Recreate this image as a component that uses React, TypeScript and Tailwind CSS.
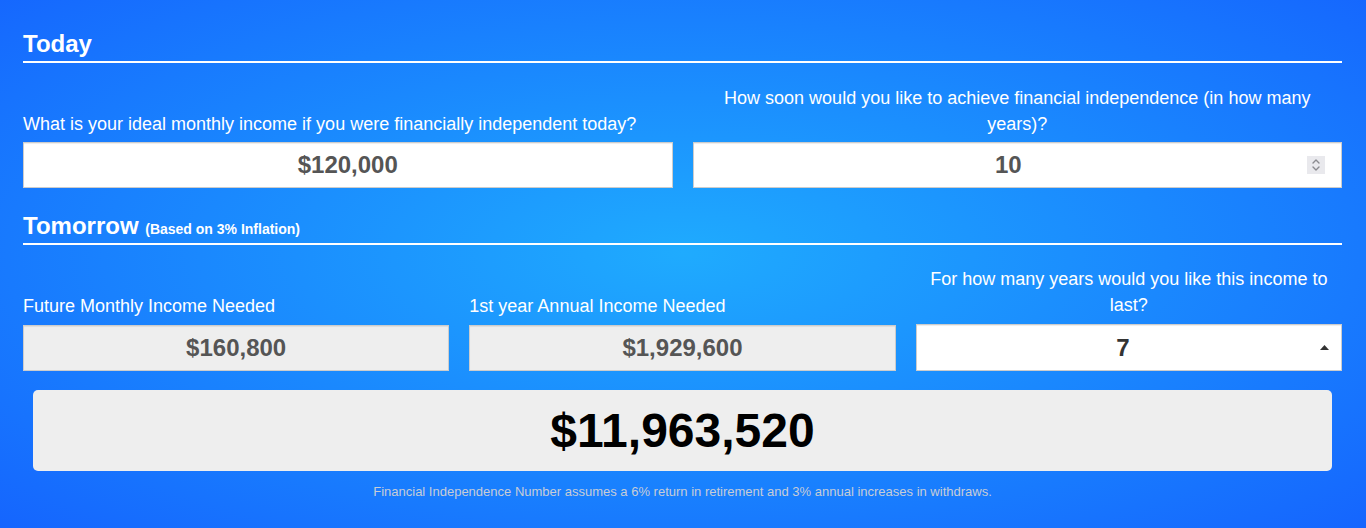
import React from "react";

function Spinner() {
  return (
    <div className="absolute right-[16px] top-1/2 -translate-y-1/2 w-[18px] h-[18px] bg-[#e9e9ed] flex items-center justify-center">
      <svg width="10" height="14" viewBox="0 0 10 14" fill="none" stroke="#8a8a8f" strokeWidth="1.4" strokeLinecap="round" strokeLinejoin="round">
        <path d="M2 5 L5 2 L8 5" />
        <path d="M2 9 L5 12 L8 9" />
      </svg>
    </div>
  );
}

function SelectArrow() {
  return (
    <div className="absolute right-[12px] top-1/2 -translate-y-1/2 w-[9px] h-[6px] flex items-center justify-center">
      <svg width="9" height="5" viewBox="0 0 9 5">
        <path d="M0 5 L4.5 0 L9 5 Z" fill="#333" />
      </svg>
    </div>
  );
}

export default function App() {
  const label = "text-white text-[18px] leading-[26px] mb-[5px]";
  const box =
    "relative h-[46px] border border-[#cccccc] shadow-[inset_0_1px_1px_rgba(0,0,0,0.075)] flex items-center justify-center text-[24px] font-bold text-[#555555]";
  return (
    <div
      className="min-h-screen w-full bg-[radial-gradient(ellipse_at_50%_48%,#1fabfe_0%,#1565fe_100%)] px-[23px] pr-[24px] pt-[30px] pb-[28px]"
      style={{ fontFamily: '"Liberation Sans", Arial, sans-serif' }}
    >
      {/* Today */}
      <div className="border-b-2 border-white pb-[3px]">
        <h2 className="text-white font-bold text-[24px] leading-[28px]">Today</h2>
      </div>

      <div className="grid grid-cols-2 gap-x-[20px] items-end mt-[22px]">
        <div>
          <div className={label}>What is your ideal monthly income if you were financially independent today?</div>
          <div className={box + " bg-white"}>$120,000</div>
        </div>
        <div>
          <div className={label + " text-center px-[4px]"}>
            How soon would you like to achieve financial independence (in how many years)?
          </div>
          <div className={box + " bg-white pl-[12px] pr-[30px]"}>
            <span className="text-[#555555]">10</span>
            <Spinner />
          </div>
        </div>
      </div>

      {/* Tomorrow */}
      <div className="border-b-2 border-white pb-[3px] mt-[24px]">
        <h2 className="text-white font-bold text-[24px] leading-[28px]">
          Tomorrow <span className="text-[14px] leading-none">(Based on 3% Inflation)</span>
        </h2>
      </div>

      <div className="grid grid-cols-3 gap-x-[20px] items-end mt-[21px]">
        <div>
          <div className={label + " mb-[6px]"}>Future Monthly Income Needed</div>
          <div className={box + " bg-[#eeeeee]"}>$160,800</div>
        </div>
        <div>
          <div className={label + " mb-[6px]"}>1st year Annual Income Needed</div>
          <div className={box + " bg-[#eeeeee]"}>$1,929,600</div>
        </div>
        <div>
          <div className={label + " mb-[6px] text-center px-[4px]"}>
            For how many years would you like this income to last?
          </div>
          <div className={box + " bg-white h-[47px] pl-[12px] pr-[24px]"}>
            <span className="text-[#333333]">7</span>
            <SelectArrow />
          </div>
        </div>
      </div>

      <div className="mx-[10px] mt-[19px] h-[81px] rounded-[5px] bg-[#eeeeee] flex items-center justify-center">
        <span className="text-[48px] font-bold text-black leading-none">$11,963,520</span>
      </div>

      <p className="mt-[13px] text-center text-[13px] leading-[16px] text-[#c7cdd6]">
        Financial Independence Number assumes a 6% return in retirement and 3% annual increases in withdraws.
      </p>
    </div>
  );
}
